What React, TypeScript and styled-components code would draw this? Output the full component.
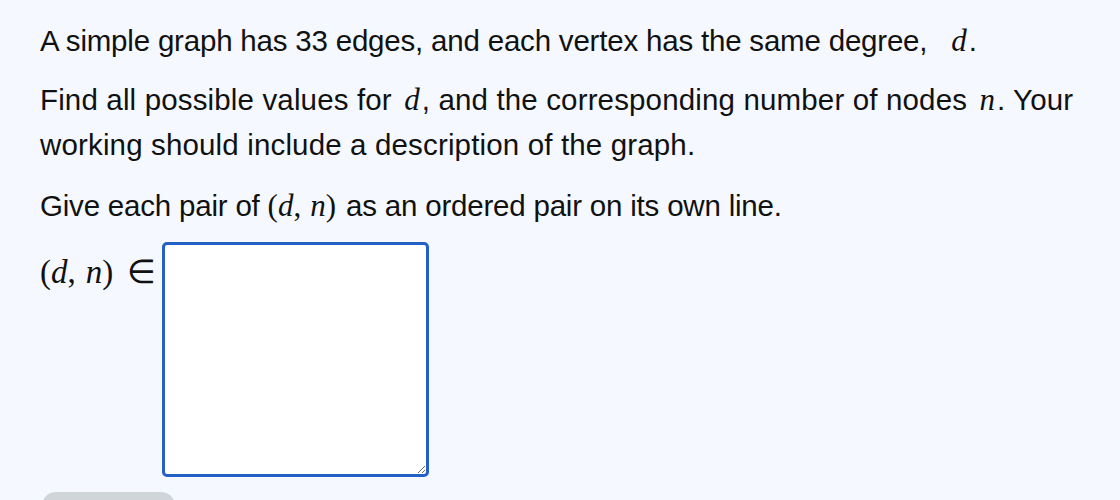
import React from "react";
import styled, { createGlobalStyle } from "styled-components";

const GlobalStyle = createGlobalStyle`
  html, body {
    margin: 0;
    padding: 0;
    background: #f5f9ff;
  }
`;

const Page = styled.div`
  padding: 18px 40px 0;
  font-family: "Liberation Sans", Arial, sans-serif;
  font-size: 29.5px;
  line-height: 45px;
  color: #111;
  height: 500px;
  box-sizing: border-box;
  overflow: hidden;
`;

const Para = styled.p<{ $gap?: number; $track?: number }>`
  margin: 0 0 ${(p) => p.$gap ?? 14}px;
  letter-spacing: ${(p) => p.$track ?? 0}px;
`;

// inline TeX-like math
const M = styled.span<{ $lead?: number }>`
  font-family: "Liberation Serif", "Times New Roman", serif;
  font-size: 31px;
  line-height: 1;
  letter-spacing: 0;
  margin-left: ${(p) => p.$lead ?? 4}px;
  padding-right: 2px;
  white-space: nowrap;
`;

const Var = styled.i`
  font-style: italic;
`;

const Thin = styled.span<{ $w?: number }>`
  display: inline-block;
  width: ${(p) => p.$w ?? 9}px;
`;

const AnswerRow = styled.div`
  display: flex;
  align-items: flex-start;
  gap: 6px;
  margin-top: 3px;
`;

const Label = styled.span`
  font-family: "Liberation Serif", "Times New Roman", serif;
  font-size: 33px;
  line-height: 40px;
  padding-top: 10px;
  white-space: nowrap;
`;

const Rel = styled.span`
  margin-left: 14px;
`;

const Answer = styled.textarea`
  width: 261px;
  height: 229px;
  border: 3px solid #2461c6;
  border-radius: 5px;
  background: #fff;
  box-sizing: content-box;
  padding: 0;
  margin: 0;
  outline: none;
  resize: both;
`;

const Submit = styled.button`
  display: block;
  margin-top: 15px;
  margin-left: 2px;
  width: 133px;
  height: 40px;
  border: none;
  border-radius: 14px;
  background: #d0d5da;
`;

export default function App() {
  return (
    <>
      <GlobalStyle />
      <Page>
        <Para $track={-0.2}>
          A simple graph has 33 edges, and each vertex has the same degree,{" "}
          <M $lead={16}>
            <Var>d</Var>
          </M>
          .
        </Para>
        <Para $gap={16} $track={0.15}>
          Find all possible values for{" "}
          <M>
            <Var>d</Var>
          </M>
          , and the corresponding number of nodes{" "}
          <M>
            <Var>n</Var>
          </M>
          . Your working should include a description of the graph.
        </Para>
        <Para $track={-0.2}>
          Give each pair of{" "}
          <M $lead={0}>
            (<Var>d</Var>,<Thin />
            <Var>n</Var>)
          </M>{" "}
          as an ordered pair on its own line.
        </Para>
        <AnswerRow>
          <Label>
            (<Var>d</Var>,<Thin $w={10} />
            <Var>n</Var>)<Rel>∈</Rel>
          </Label>
          <Answer />
        </AnswerRow>
        <Submit />
      </Page>
    </>
  );
}
